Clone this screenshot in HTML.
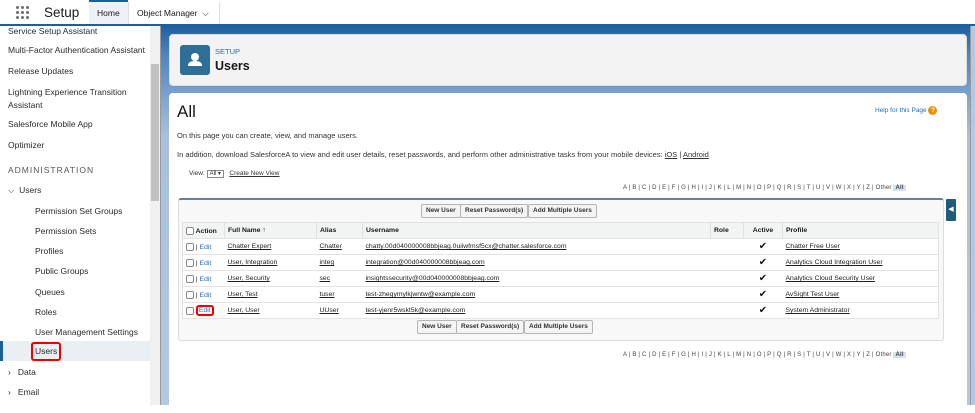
<!DOCTYPE html>
<html><head><meta charset="utf-8"><style>
*{box-sizing:border-box;margin:0;padding:0}
body{width:975px;height:405px;overflow:hidden;font-family:"Liberation Sans",Arial,sans-serif;background:#fff;position:relative;color:#181818}
.top{position:absolute;left:0;top:0;width:975px;height:26px;background:#fff;border-bottom:2px solid #1b5f9e}
.grid{position:absolute;left:16px;top:6px;width:13px;height:13px;display:grid;grid-template-columns:repeat(3,3px);gap:2px}
.grid i{width:3px;height:3px;background:#706e6b;border-radius:50%}
.setup{position:absolute;left:44px;top:5px;font-size:13.5px;color:#181818}
.tab{position:absolute;top:2px;height:22px;font-size:8.5px;line-height:22px;padding:0 8px;color:#181818}
.side{position:absolute;left:0;top:26px;width:161px;height:379px;background:#fff;font-size:8.5px;color:#2b2b2b;overflow:hidden;border-right:1px solid #999}
.side div{position:absolute;left:8px;white-space:nowrap}
.sb{position:absolute;left:150px;top:26px;width:10px;height:379px;background:#f0f0f0}
.thumb{position:absolute;left:151px;top:64px;width:8px;height:137px;background:#c1c1c1}
.main{position:absolute;left:161px;top:26px;width:814px;height:379px;background:linear-gradient(#1f5f9f 0,#4f86bf 30px,#a9c0de 110px,#b3c8e2 379px)}
.card{position:absolute;background:#fff;border-radius:4px}
.alpha{position:absolute;font-size:6px;color:#444;letter-spacing:0.2px}
.alpha b{background:#d4e2f2;padding:0 2px}
.btn{position:absolute;height:14px;border:1px solid #b5b5b5;border-radius:2px;background:#f4f4f4;font-size:6.5px;font-weight:bold;line-height:12px;padding:0 4px;color:#333}
table{position:absolute;left:182px;top:222px;width:757px;border-collapse:collapse;font-size:6.8px;background:#fff;border:1px solid #e0e3e5}
td,th{height:16px;border-bottom:1px solid #e3e3e3;text-align:left;padding:0 3px;white-space:nowrap}
th{background:#f2f3f3;font-weight:bold;height:16px;border-right:1px solid #e0e0e0}
td u{color:#222}
.cb{display:inline-block;width:8px;height:8px;border:1px solid #888;border-radius:2px;vertical-align:middle;background:#fff}
.ed{color:#1f6cc0}
.ck{text-align:center;font-size:10px;line-height:10px}
</style></head><body>
<div class="top">
<div class="grid"><i></i><i></i><i></i><i></i><i></i><i></i><i></i><i></i><i></i></div>
<div class="setup">Setup</div>
<div class="tab" style="left:89px;background:#eef1f6;border-top:2px solid #1b5f9e;height:24px;top:0;line-height:22px">Home</div>
<div class="tab" style="left:128px;border-left:1px solid #ddd;border-right:1px solid #ddd">Object Manager &nbsp;⌵&nbsp;</div>
</div>
<div class="side">
<div style="top:0px">Service Setup Assistant</div>
<div style="top:19px">Multi-Factor Authentication Assistant</div>
<div style="top:40px">Release Updates</div>
<div style="top:60px;line-height:13px">Lightning Experience Transition<br>Assistant</div>
<div style="top:93px">Salesforce Mobile App</div>
<div style="top:114px">Optimizer</div>
<div style="top:139px;letter-spacing:1px;color:#555">ADMINISTRATION</div>
<div style="top:159px">⌵&nbsp; Users</div>
<div style="top:180px;left:35px">Permission Set Groups</div>
<div style="top:200px;left:35px">Permission Sets</div>
<div style="top:220px;left:35px">Profiles</div>
<div style="top:240px;left:35px">Public Groups</div>
<div style="top:261px;left:35px">Queues</div>
<div style="top:281px;left:35px">Roles</div>
<div style="top:301px;left:35px">User Management Settings</div>
<div style="top:315px;left:0;width:150px;height:20px;background:#eaeff4;border-left:3px solid #1b5f9e"></div>
<div style="top:316px;left:31px;border:2px solid #e00;border-radius:3px;padding:2px 2px;line-height:11px">Users</div>
<div style="top:341px">›&nbsp;&nbsp; Data</div>
<div style="top:361px">›&nbsp;&nbsp; Email</div>
</div>
<div class="sb"></div><div class="thumb"></div>
<div class="main"></div>
<div class="card" style="left:169px;top:34px;width:798px;height:52px;background:#f3f3f3;border:1px solid #ddd"></div>
<div style="position:absolute;left:180px;top:45px;width:30px;height:30px;background:#2f6e96;border-radius:3px"><svg width="30" height="30"><circle cx="15" cy="12" r="4" fill="#fff"/><path d="M8 21c0-4 3-5 7-5s7 1 7 5z" fill="#fff"/></svg></div>
<div style="position:absolute;left:215px;top:47px;font-size:7.5px;color:#2f6e96">SETUP</div>
<div style="position:absolute;left:215px;top:59px;font-size:12.5px;font-weight:bold">Users</div>
<div class="card" style="left:169px;top:93px;width:798px;height:320px"></div>
<div style="position:absolute;left:177px;top:102px;font-size:17px">All</div>
<div style="position:absolute;left:875px;top:106px;font-size:6.5px;color:#1f6cc0">Help for this Page <span style="display:inline-block;width:9px;height:9px;border-radius:50%;background:#e8920c;color:#fff;text-align:center;font-size:6.5px;line-height:9px;font-weight:bold">?</span></div>
<div style="position:absolute;left:177px;top:131px;font-size:7.5px;color:#333">On this page you can create, view, and manage users.</div>
<div style="position:absolute;left:177px;top:150px;font-size:7.5px;color:#333">In addition, download SalesforceA to view and edit user details, reset passwords, and perform other administrative tasks from your mobile devices: <u>iOS</u> | <u>Android</u></div>
<div style="position:absolute;left:189px;top:170px;font-size:6.5px;color:#333">View: <span style="border:1px solid #888;padding:0 2px;font-size:6px">All ▾</span> &nbsp;&nbsp;<u>Create New View</u></div>
<div class="alpha" style="left:623px;top:185px">A | B | C | D | E | F | G | H | I | J | K | L | M | N | O | P | Q | R | S | T | U | V | W | X | Y | Z | Other <b>All</b></div>
<div style="position:absolute;left:178px;top:198px;width:766px;height:143px;background:#f8f8f8;border:1px solid #ddd;border-top:2px solid #6d7e94;border-radius:3px"></div>
<div style="position:absolute;left:945px;top:198px;width:12px;height:24px;background:#1e5a7c;border:1px solid #fff;border-radius:2px;color:#fff;font-size:7px;line-height:22px;text-align:center">◀</div>
<div class="btn" style="left:421px;top:204px">New User</div>
<div class="btn" style="left:460px;top:204px">Reset Password(s)</div>
<div class="btn" style="left:528px;top:204px">Add Multiple Users</div>
<table>
<tr><th style="width:42px"><span class="cb"></span> Action</th><th style="width:92px">Full Name ↑</th><th style="width:46px">Alias</th><th style="width:348px">Username</th><th style="width:33px">Role</th><th style="width:39px;text-align:center">Active</th><th style="border-right:0">Profile</th></tr>
<tr><td><span class="cb"></span> | <span class="ed">Edit</span></td><td><u>Chatter Expert</u></td><td><u>Chatter</u></td><td><u>chatty.00d040000008bbjeag.0uiiwfmsf5cx@chatter.salesforce.com</u></td><td></td><td class="ck">✔</td><td><u>Chatter Free User</u></td></tr>
<tr><td><span class="cb"></span> | <span class="ed">Edit</span></td><td><u>User, Integration</u></td><td><u>integ</u></td><td><u>integration@00d040000008bbjeag.com</u></td><td></td><td class="ck">✔</td><td><u>Analytics Cloud Integration User</u></td></tr>
<tr><td><span class="cb"></span> | <span class="ed">Edit</span></td><td><u>User, Security</u></td><td><u>sec</u></td><td><u>insightssecurity@00d040000008bbjeag.com</u></td><td></td><td class="ck">✔</td><td><u>Analytics Cloud Security User</u></td></tr>
<tr><td><span class="cb"></span> | <span class="ed">Edit</span></td><td><u>User, Test</u></td><td><u>tuser</u></td><td><u>test-zhegymylkjwntw@example.com</u></td><td></td><td class="ck">✔</td><td><u>AvSight Test User</u></td></tr>
<tr><td><span class="cb"></span> <span class="ed" style="border:2px solid #e00;border-radius:3px;padding:0 1px">Edit</span></td><td><u>User, User</u></td><td><u>UUser</u></td><td><u>test-yjenr5wskt5k@example.com</u></td><td></td><td class="ck">✔</td><td><u>System Administrator</u></td></tr>
</table>
<div class="btn" style="left:417px;top:320px">New User</div>
<div class="btn" style="left:456px;top:320px">Reset Password(s)</div>
<div class="btn" style="left:524px;top:320px">Add Multiple Users</div>
<div class="alpha" style="left:623px;top:352px">A | B | C | D | E | F | G | H | I | J | K | L | M | N | O | P | Q | R | S | T | U | V | W | X | Y | Z | Other <b>All</b></div>
<div style="position:absolute;left:970px;top:26px;width:5px;height:379px;background:#b3c8e2;border-left:1px solid #999"></div>
</body></html>
